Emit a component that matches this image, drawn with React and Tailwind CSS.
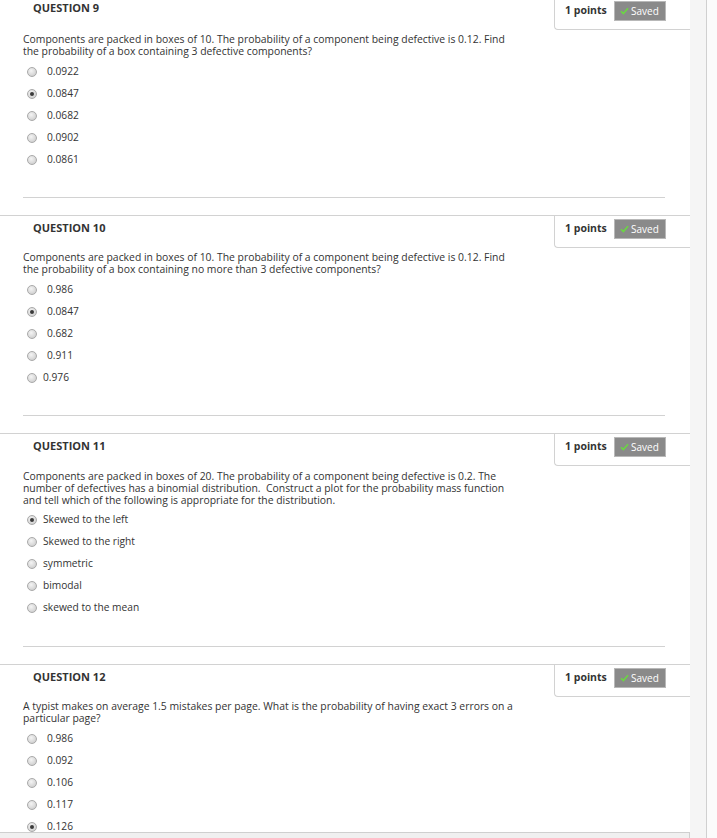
import React from "react";

const questions = [
  {
    n: 9,
    text: [
      "Components are packed in boxes of 10. The probability of a component being defective is 0.12. Find",
      "the probability of a box containing 3 defective components?",
    ],
    options: ["0.0922", "0.0847", "0.0682", "0.0902", "0.0861"],
    selected: 1,
    narrow: [],
  },
  {
    n: 10,
    text: [
      "Components are packed in boxes of 10. The probability of a component being defective is 0.12. Find",
      "the probability of a box containing no more than 3 defective components?",
    ],
    options: ["0.986", "0.0847", "0.682", "0.911", "0.976"],
    selected: 1,
    narrow: [4],
  },
  {
    n: 11,
    text: [
      "Components are packed in boxes of 20. The probability of a component being defective is 0.2. The",
      "number of defectives has a binomial distribution.  Construct a plot for the probability mass function",
      "and tell which of the following is appropriate for the distribution.",
    ],
    options: ["Skewed to the left", "Skewed to the right", "symmetric", "bimodal", "skewed to the mean"],
    selected: 0,
    narrow: [0, 1, 2, 3, 4],
  },
  {
    n: 12,
    text: [
      "A typist makes on average 1.5 mistakes per page. What is the probability of having exact 3 errors on a",
      "particular page?",
    ],
    options: ["0.986", "0.092", "0.106", "0.117", "0.126"],
    selected: 4,
    narrow: [],
  },
];

function Radio({ checked }) {
  return (
    <span className="relative flex h-[10px] w-[10px] items-center justify-center rounded-full border border-[#a9a9a9] bg-[radial-gradient(circle_at_40%_35%,#f4f4f4,#c6c6c6)]">
      {checked && <span className="h-[4px] w-[4px] rounded-full bg-[#3a3a3a]" />}
    </span>
  );
}

function Saved() {
  return (
    <div className="flex h-[20px] w-[52px] items-center border border-[#b8b8b8] bg-[#8a8a8a] pl-[5px] text-[10px] text-white">
      <svg width="9" height="8" viewBox="0 0 9 8" className="mr-[2px]">
        <path d="M1 4.2 L3.4 6.6 L8 1.2" fill="none" stroke="#6ad742" strokeWidth="1.6" />
      </svg>
      <span>Saved</span>
    </div>
  );
}

function Question({ q, first }) {
  const three = q.text.length === 3;
  return (
    <div className={first ? "mt-[-3px] border-t border-[#d2d2d2]" : "border-t border-[#d2d2d2]"}>
      <div className="flex items-start justify-between">
        <div
          className={
            (first ? "pt-[3px]" : "pt-[5px]") +
            " pl-[33px] text-[11px] font-bold leading-[14px] text-[#333]"
          }
        >
          QUESTION {q.n}
        </div>
        <div className="flex h-[32px] w-[136px] items-start rounded-bl-[4px] border-b border-l border-[#d2d2d2] pl-[10px] pt-[3px]">
          <div className="flex items-center">
            <span className="w-[49px] text-[10.5px] font-bold text-[#333]">1 points</span>
            <Saved />
          </div>
        </div>
      </div>
      <div
        className={
          (three ? "mt-[4px]" : "mt-[3px]") +
          " pl-[23px] text-[10.4px] leading-[12px] text-[#333]"
        }
      >
        {q.text.map((t, i) => (
          <div key={i} className="whitespace-pre">{t}</div>
        ))}
      </div>
      <div className={(three ? "mt-[3px]" : "mt-[4px]") + " flex flex-col"}>
        {q.options.map((o, i) => (
          <div key={i} className="flex h-[22px] items-center pl-[27px]">
            <Radio checked={q.selected === i} />
            <span
              className={
                (q.narrow.includes(i) ? "ml-[6px]" : "ml-[10px]") +
                " text-[10.2px] text-[#333]"
              }
            >
              {o}
            </span>
          </div>
        ))}
      </div>
      <div
        className={
          (three ? "mt-[27px]" : "mt-[26px]") +
          " mx-[23px] mb-[17px] w-[642px] border-b border-[#d2d2d2]"
        }
      />
    </div>
  );
}

export default function App() {
  return (
    <div className="flex h-[838px] w-[717px] overflow-hidden bg-white font-['Open_Sans',sans-serif]">
      <div className="relative flex w-[690px] flex-col overflow-hidden bg-white">
        {questions.map((q, i) => (
          <Question key={q.n} q={q} first={i === 0} />
        ))}
        <div className="absolute bottom-0 left-0 h-[6px] w-[690px] border-t border-r border-[#cfcfcf] bg-[#f0f0f0]" />
      </div>
      <div className="w-[16px] bg-[#f5f5f5]" />
      <div className="w-px bg-[#d0d0d0]" />
      <div className="flex-1 bg-[#fbfbfb]" />
    </div>
  );
}
